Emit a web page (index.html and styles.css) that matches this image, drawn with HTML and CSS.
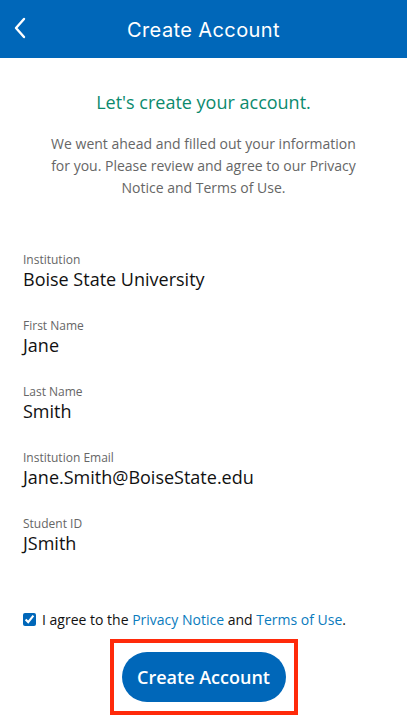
FILE: index.html
```html
<!DOCTYPE html>
<html lang="en">
<head>
    <meta charset="UTF-8">
    <meta name="viewport" content="width=device-width, initial-scale=1.0">
    <title>Create Account</title>
    <link rel="stylesheet" href="styles.css">
</head>
<body>
    <header class="topbar">
        <button class="back-btn" aria-label="Back">
            <svg width="14" height="22" viewBox="0 0 14 22">
                <path d="M11 2 L3 11 L11 20" fill="none" stroke="#fff" stroke-width="2.4" stroke-linecap="round" stroke-linejoin="round"/>
            </svg>
        </button>
        <h1 class="topbar-title">Create Account</h1>
    </header>

    <main class="content">
        <h2 class="intro-title">Let's create your account.</h2>
        <p class="intro-text">We went ahead and filled out your information for you. Please review and agree to our Privacy Notice and Terms of Use.</p>

        <dl class="fields">
            <div class="field">
                <dt>Institution</dt>
                <dd>Boise State University</dd>
            </div>
            <div class="field">
                <dt>First Name</dt>
                <dd>Jane</dd>
            </div>
            <div class="field">
                <dt>Last Name</dt>
                <dd>Smith</dd>
            </div>
            <div class="field">
                <dt>Institution Email</dt>
                <dd>Jane.Smith@BoiseState.edu</dd>
            </div>
            <div class="field">
                <dt>Student ID</dt>
                <dd>JSmith</dd>
            </div>
        </dl>

        <label class="agree">
            <input type="checkbox" checked>
            <span>I agree to the <a href="#">Privacy Notice</a> and <a href="#">Terms of Use</a>.</span>
        </label>

        <div class="submit-wrap">
            <button class="submit-btn">Create Account</button>
        </div>
    </main>
</body>
</html>
```

FILE: styles.css
```css
* {
    box-sizing: border-box;
}

body {
    margin: 0;
    font-family: 'Open Sans', sans-serif;
    background-color: #ffffff;
    color: #111;
}

.topbar {
    height: 58px;
    background-color: #0067b9;
    display: flex;
    align-items: center;
    justify-content: center;
    position: relative;
}

.back-btn {
    position: absolute;
    left: 13px;
    top: 17px;
    padding: 0;
    border: none;
    background: none;
    cursor: pointer;
}

.topbar-title {
    margin: 2px 0 0;
    color: #fff;
    font-family: 'Inter', sans-serif;
    font-weight: 400;
    font-size: 20px;
    letter-spacing: 0.4px;
}

.content {
    padding: 0 23px;
}

.intro-title {
    margin: 32px 0 0;
    text-align: center;
    color: #0b8a6d;
    font-weight: 400;
    font-size: 18px;
    line-height: 24px;
}

.intro-text {
    margin: 19px auto 0;
    max-width: 320px;
    text-align: center;
    color: #666;
    font-size: 14px;
    line-height: 22px;
}

.fields {
    margin: 53px 0 0;
}

.field {
    margin-bottom: 28px;
}

.field dt {
    color: #666;
    font-size: 12px;
    line-height: 16px;
}

.field dd {
    margin: 0;
    font-size: 18px;
    line-height: 22px;
}

.agree {
    display: flex;
    align-items: center;
    gap: 6px;
    margin-top: 56px;
    font-size: 14px;
    color: #111;
}

.agree input {
    margin: 0;
    width: 13px;
    height: 13px;
    accent-color: #0067b9;
}

.agree a {
    color: #0a7bbd;
    text-decoration: none;
}

.submit-wrap {
    width: 188px;
    margin: 10px auto 0;
    padding: 9px 8px;
    border: 4px solid #ff2a0a;
}

.submit-btn {
    display: block;
    width: 100%;
    height: 50px;
    border: none;
    border-radius: 25px;
    background-color: #0067b9;
    color: #fff;
    font-family: 'Open Sans', sans-serif;
    font-weight: 600;
    font-size: 18px;
    cursor: pointer;
}
```
